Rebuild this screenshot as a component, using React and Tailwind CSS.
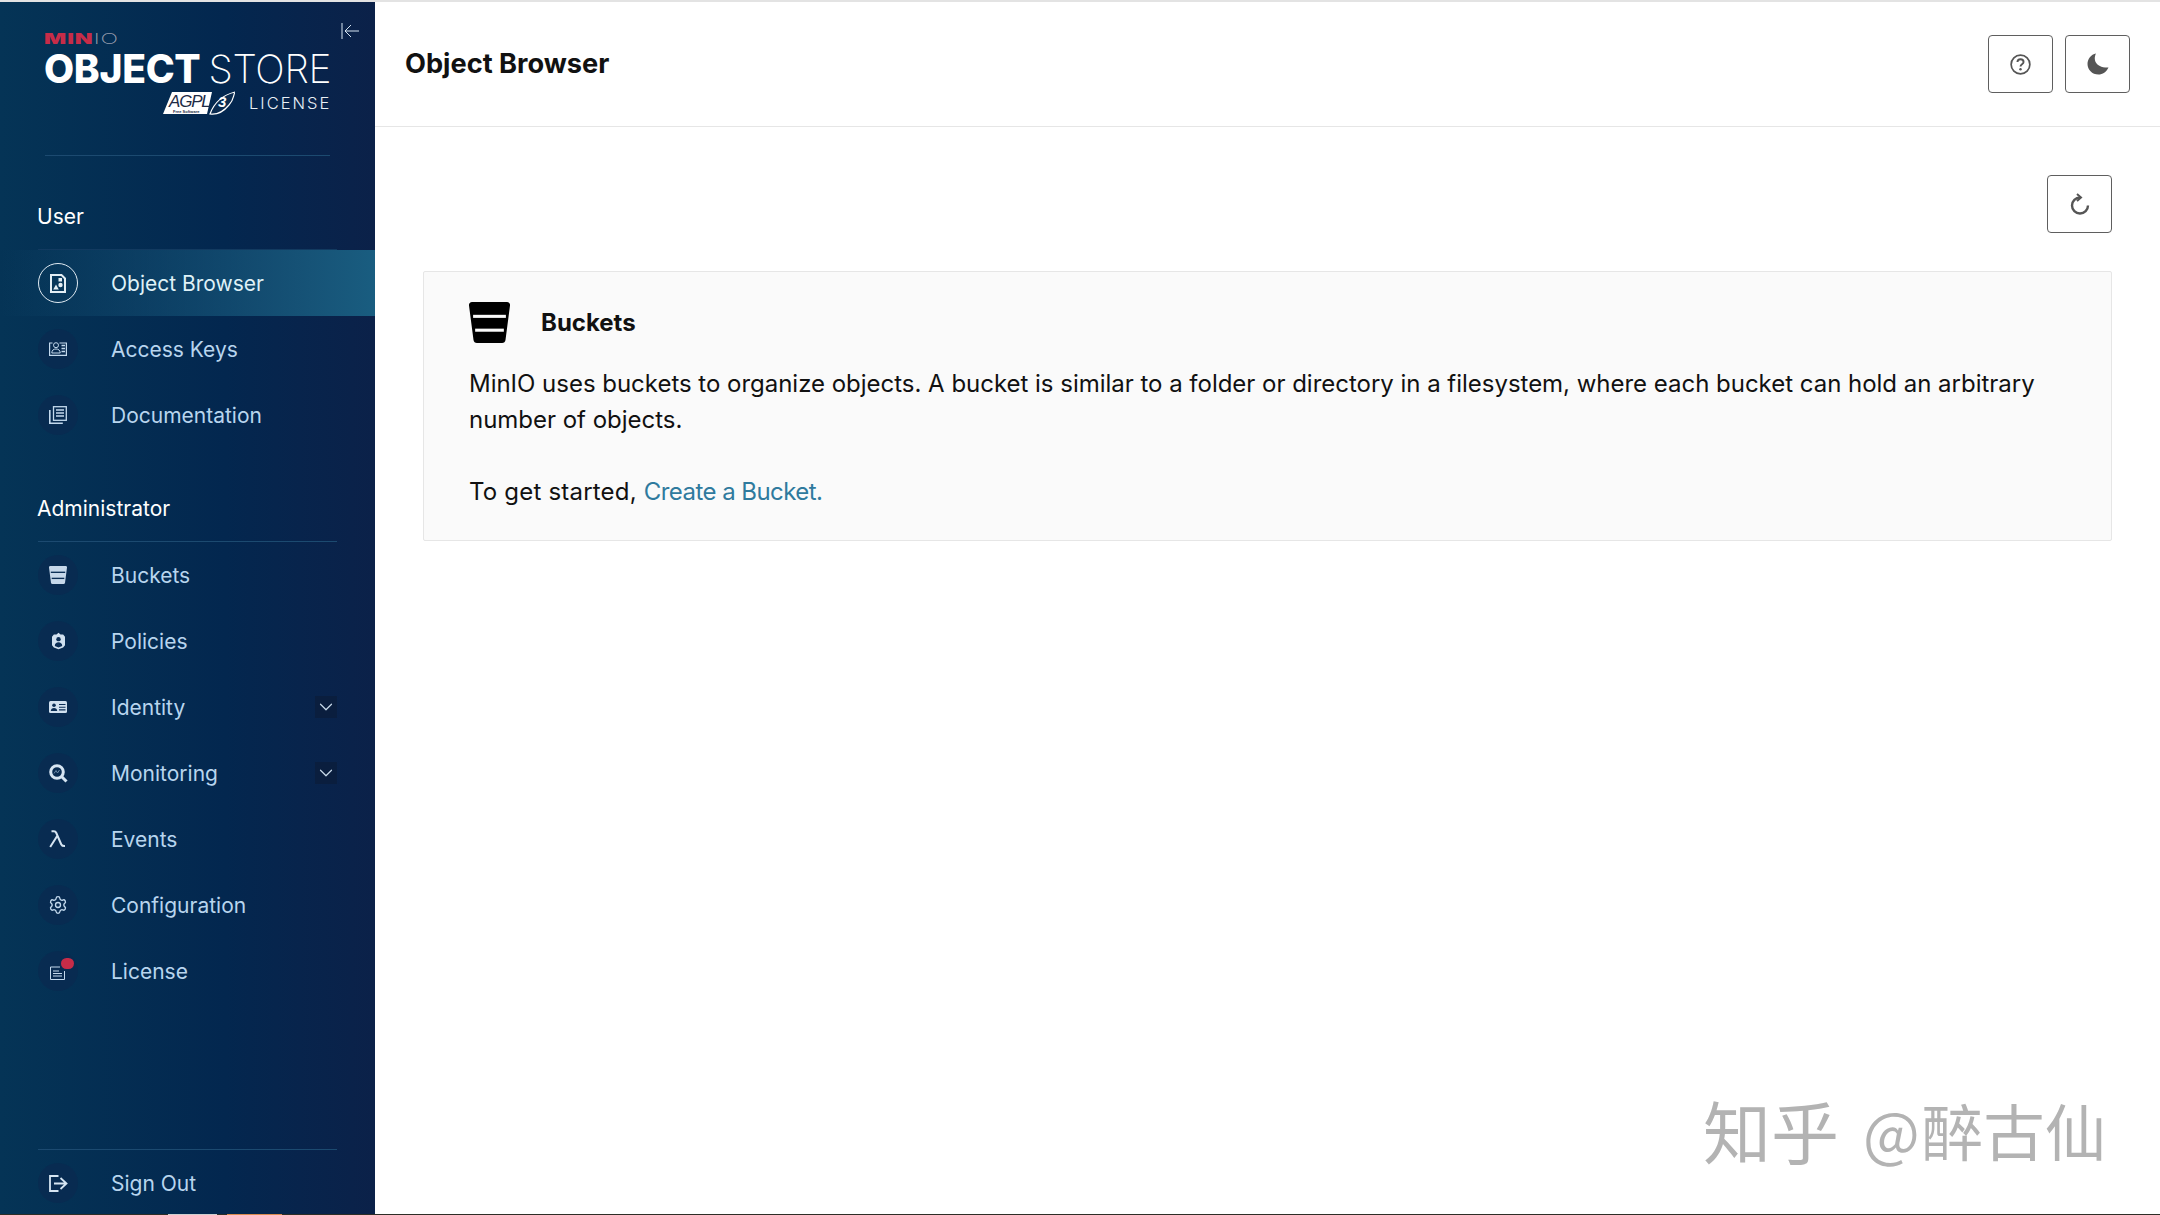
import React from "react";
import { ChevronDown, Settings } from "lucide-react";

function ObjectBrowserIcon() {
  return (
    <svg viewBox="0 0 16 19" className="w-[16px] h-[19px]" fill="none">
      <path d="M1 1h10.500L15 4.500V18H1z" stroke="#e3eef5" strokeWidth="2" />
      <rect x="8.500" y="4" width="3.500" height="3.500" fill="#e3eef5" />
      <circle cx="10.500" cy="11" r="2.200" fill="#e3eef5" />
      <path d="M6 10.500l2.800 5H3.200z" fill="#e3eef5" />
    </svg>
  );
}

function AccessKeysIcon() {
  return (
    <svg viewBox="0 0 18 14" className="w-[18px] h-[14px]" fill="none" stroke="#c3d9ed" strokeWidth="1">
      <path d="M3.500 1H.6v12.400h16.800V1H10.500" strokeWidth="1.200" />
      <circle cx="7" cy="3.200" r="2.500" />
      <path d="M2.800 11c0-2.800 1.800-4 4.200-4s4.200 1.200 4.200 4z" />
      <path d="M12.500 3.500h3.500M12.500 6.500h3.500M12.500 9.500h3.500" strokeWidth="1.500" />
    </svg>
  );
}

function DocumentationIcon() {
  return (
    <svg viewBox="0 0 18 18" className="w-[18px] h-[18px]" fill="none" stroke="#c3d9ed">
      <rect x="4.500" y="0.700" width="12.800" height="13.600" strokeWidth="1.300" />
      <path d="M7 4h8M7 7h8M7 10h8" strokeWidth="1.400" />
      <path d="M0.800 4v13.200h13" strokeWidth="1.600" />
    </svg>
  );
}

function BucketIcon({ size = "w-[18px] h-[18px]", fill = "#c6d8ea", line = "#0a2d55" }) {
  return (
    <svg viewBox="0 0 40 40" className={size}>
      <path d="M3 0h34a3 3 0 0 1 3 3.400L35.600 37a3.500 3.500 0 0 1-3.400 3H7.800a3.500 3.500 0 0 1-3.400-3L0 3.400A3 3 0 0 1 3 0z" fill={fill} />
      <rect x="4" y="12.500" width="32" height="3" fill={line} />
      <rect x="6" y="26" width="28" height="3" fill={line} />
    </svg>
  );
}

function PoliciesIcon() {
  return (
    <svg viewBox="0 0 14 18" className="w-[13px] h-[18px]">
      <path d="M7 0l2.200 2H12l2 2.500v9L12 16l-5 2-5-2-2-2.500v-9L2 2h2.800z" fill="#d0e0ef" />
      <circle cx="7" cy="7" r="2.400" fill="#0a2d55" />
      <path d="M3 14.500c0-3 1.800-4.200 4-4.200s4 1.200 4 4.200l-4 1.500z" fill="#0a2d55" />
    </svg>
  );
}

function IdentityIcon() {
  return (
    <svg viewBox="0 0 18 12" className="w-[18px] h-[12px]">
      <rect width="18" height="12" rx="1.500" fill="#d0e0ef" />
      <circle cx="5" cy="4.300" r="1.800" fill="#0a2d55" />
      <path d="M1.800 10c0-2 1.400-3 3.200-3s3.200 1 3.200 3z" fill="#0a2d55" />
      <path d="M10 3.500h6.500M10 6.200h6.500M10 8.900h6.500" stroke="#0a2d55" strokeWidth="1.100" />
    </svg>
  );
}

function MonitoringIcon() {
  return (
    <svg viewBox="0 0 19 19" className="w-[19px] h-[19px]" fill="none">
      <circle cx="8" cy="8" r="6.300" stroke="#d6e5f2" strokeWidth="3" />
      <path d="M12.500 12.500l5 5" stroke="#d6e5f2" strokeWidth="3" />
      <path d="M5 9.500l2-3 1.500 2.500 2-3" stroke="#6b8aa8" strokeWidth="1" />
    </svg>
  );
}

function LambdaIcon() {
  return (
    <svg viewBox="0 0 18 18" className="w-[18px] h-[18px]" fill="none" stroke="#d6e5f2" strokeWidth="2">
      <path d="M2.500 1.200h2.300c1.300 0 2 .6 2.500 1.800l5 11.500c.5 1.100 1.200 1.700 3.700 1.600M8 6.300L1.200 17" />
    </svg>
  );
}

function LicenseIcon() {
  return (
    <span className="relative flex">
      <svg viewBox="0 0 15 14" className="w-[15px] h-[14px] mt-[4px] -ml-[1px]" fill="none" stroke="#c3d9ed" strokeWidth="1">
        <path d="M10 1H.5v12.500h14V5" />
        <path d="M3 5h6M3 7.500h9M3 10h9" strokeWidth="1.100" />
      </svg>
      <span className="absolute -top-[4px] left-[10px] w-[13px] h-[11px] rounded-full bg-[#c72c48]" />
    </span>
  );
}

function SignOutIcon() {
  return (
    <svg viewBox="0 0 19 17" className="w-[19px] h-[17px]" fill="none" stroke="#d6e5f2" strokeWidth="1.800">
      <path d="M9.500 1H1v15h8.500" />
      <path d="M5 8.500h12.500M11.500 3l6 5.500-6 5.500" />
    </svg>
  );
}

function NavRow({ label, icon, active, expand }) {
  return (
    <div className={`flex items-center h-[66px] shrink-0 pl-[38px] pr-[38px] ${active ? "bg-linear-to-r from-transparent to-[#195d80]" : ""}`}>
      <span className={`flex items-center justify-center w-[40px] h-[40px] rounded-full shrink-0 ${active ? "border border-[#dfeaf2]" : "bg-[#0a2a50]/70"}`}>
        {icon}
      </span>
      <span className={`ml-[33px] text-[21px] leading-none ${active ? "text-[#dff1f7]" : "text-[#b8d5ee]"}`}>{label}</span>
      {expand && (
        <span className="ml-auto flex items-center justify-center w-[22px] h-[22px] bg-[#0a1e3e]">
          <ChevronDown size={22} color="#c9dbea" strokeWidth={1.300} />
        </span>
      )}
    </div>
  );
}

function AgplLogo() {
  return (
    <svg viewBox="0 0 72 24" className="w-[72px] h-[24px] ml-[119px] shrink-0">
      <path d="M0 23L9 1H49L44 23z" fill="#fff" />
      <text x="6" y="16" fontFamily="Liberation Sans" fontStyle="italic" fontSize="17" fill="#1d2b45" letterSpacing="-1.200">AGPL</text>
      <text x="10" y="21.500" fontFamily="Liberation Sans" fontWeight="700" fontSize="4" fill="#1d2b45">Free Software</text>
      <path d="M47 23C51 12 60 4 72 1 70 5 71 9 66 14 61 20 54 24 47 23z" fill="#0a2b50" stroke="#fff" strokeWidth="1.200" />
      <text x="55" y="16" fontFamily="Liberation Sans" fontStyle="italic" fontWeight="700" fontSize="15" fill="#fff">3</text>
    </svg>
  );
}

function Logo() {
  return (
    <div className="relative h-[153px] shrink-0 pl-[44px]">
      <div className="pt-[29px] leading-none text-[15px] tracking-[0.6px] text-[#c72c48] h-[48px] w-fit origin-left scale-x-[1.55]">
        <span className="font-black">MIN</span>
        <span className="font-extralight text-[#d8d0d8]/70">IO</span>
      </div>
      <div className="text-[39px] leading-[38px] text-white tracking-[-0.300px] whitespace-nowrap">
        <span className="font-extrabold">OBJECT</span>
        <span className="font-extralight ml-[8px]">STORE</span>
      </div>
      <div className="flex items-center mt-[2px] h-[26px]">
        <AgplLogo />
        <span className="ml-[14px] text-[16.500px] font-light tracking-[2px] text-[#e8f0f6] leading-none">LICENSE</span>
      </div>
      {/* collapse button */}
      <svg viewBox="0 0 18 16" className="absolute left-[341px] top-[21px] w-[18px] h-[16px]" fill="none" stroke="#d6e5f2" strokeWidth="1">
        <path d="M1 0v16M18 8H4M10 2L4 8l6 6" />
      </svg>
    </div>
  );
}

function Sidebar() {
  return (
    <aside className="flex flex-col w-[375px] shrink-0 overflow-hidden bg-linear-to-r from-[#053456] from-0% via-[#03274f] via-60% to-[#0b2149] to-100%">
      <Logo />
      <div className="mx-[45px] w-[285px] border-t border-[#1c4a70] shrink-0" />
      <div className="mt-[47px] mb-[18px] mx-[37px] h-[28px] flex items-center text-[21px] text-white shrink-0">User</div>
      <div className="mx-[38px] border-t border-[#123a60] shrink-0" />
      <NavRow label="Object Browser" icon={<ObjectBrowserIcon />} active />
      <NavRow label="Access Keys" icon={<AccessKeysIcon />} />
      <NavRow label="Documentation" icon={<DocumentationIcon />} />
      <div className="mt-[47px] mb-[18px] mx-[37px] h-[28px] flex items-center text-[21px] text-white shrink-0">Administrator</div>
      <div className="mx-[38px] border-t border-[#1c4a70] shrink-0" />
      <NavRow label="Buckets" icon={<BucketIcon />} />
      <NavRow label="Policies" icon={<PoliciesIcon />} />
      <NavRow label="Identity" icon={<IdentityIcon />} expand />
      <NavRow label="Monitoring" icon={<MonitoringIcon />} expand />
      <NavRow label="Events" icon={<LambdaIcon />} />
      <NavRow label="Configuration" icon={<Settings size={20} color="#c3d9ed" strokeWidth={1.600} />} />
      <NavRow label="License" icon={<LicenseIcon />} />
      <div className="mt-auto mx-[38px] border-t border-[#1c4a70] shrink-0" />
      <div className="-mb-[2px]">
        <NavRow label="Sign Out" icon={<SignOutIcon />} />
      </div>
    </aside>
  );
}

function IconButton({ children }) {
  return (
    <button className="flex items-center justify-center w-[65px] h-[58px] rounded-[4px] border-[1.500px] border-[#5f5f5f] bg-white text-[#555]">
      {children}
    </button>
  );
}

export default function App() {
  return (
    <div className="relative flex flex-col w-[2160px] h-[1215px] overflow-hidden bg-white font-[Inter,sans-serif]">
      <div className="h-[2px] bg-[#e3e3e3] shrink-0" />
      <div className="flex flex-1 min-h-0">
        <Sidebar />
        <main className="flex-1 min-w-0">
          <header className="flex items-center justify-between h-[125px] pl-[30px] pr-[30px] border-b border-[#e6e6e6]">
            <h1 className="text-[27.200px] font-bold text-[#111]">Object Browser</h1>
            <div className="flex gap-[12px]">
              <IconButton>
                <svg viewBox="0 0 22 22" className="w-[21px] h-[21px]" fill="none" stroke="#555" strokeWidth="1.800">
                  <circle cx="11" cy="11" r="9.800" />
                  <path d="M7.800 8.500c0-2 1.400-3 3.200-3s3.200 1.100 3.200 2.800c0 2.400-3.200 2.300-3.200 4.700" strokeWidth="2" />
                  <circle cx="11" cy="16" r="1.300" fill="#555" stroke="none" />
                </svg>
              </IconButton>
              <IconButton>
                <svg viewBox="0 0 22 22" className="w-[22px] h-[22px]">
                  <path d="M9 .500C6 6 8 15 21.500 14.500 19.500 19 15.500 21.500 11.500 21.500 5 21.500.500 16.500.500 11 .500 6 4 1.500 9 .500z" fill="#555" />
                </svg>
              </IconButton>
            </div>
          </header>
          <div className="pl-[48px] pr-[48px]">
            <div className="flex justify-end pt-[48px]">
              <IconButton>
                <svg viewBox="0 0 20 23" className="w-[20px] h-[23px]" fill="none" stroke="#555" strokeWidth="2.400">
                  <path d="M10 4.500a8 8 0 1 0 8 8" />
                  <path d="M7 1l4 3.500L7 8" strokeWidth="2" />
                </svg>
              </IconButton>
            </div>
            <section className="mt-[38px] h-[270px] rounded-[2px] border border-[#e6e6e6] bg-[#fafafa] pt-[30px] pl-[45px] pr-[45px]">
              <div className="flex items-center gap-[31px]">
                <BucketIcon size="w-[41px] h-[41px]" fill="#000" line="#fafafa" />
                <h2 className="text-[24px] font-bold text-[#111]">Buckets</h2>
              </div>
              <p className="mt-[23px] text-[24px] leading-[36px] tracking-[-0.020px] text-[#111]">
                MinIO uses buckets to organize objects. A bucket is similar to a folder or directory in a filesystem, where each bucket can hold an arbitrary number of objects.
              </p>
              <p className="mt-[36px] text-[24px] leading-[36px] text-[#111]">
                <span className="tracking-[0.200px]">To get started, </span>
                <a className="text-[#2f7a9e] tracking-[-0.550px]">Create a Bucket.</a>
              </p>
            </section>
          </div>
        </main>
      </div>
      <div className="flex h-px bg-[#2e2e26] shrink-0 pl-[168px]">
        <span className="w-[49px] bg-[#cfcfcf]" />
        <span className="ml-[10px] w-[55px] bg-[#d98a4e]" />
      </div>
      {/* watermark */}
      <div className="absolute left-[1703px] top-[1090px] flex items-center h-[80px] text-[#b3b3b3] whitespace-nowrap font-['Noto_Sans_CJK_SC',sans-serif]">
        <span className="text-[68px] leading-none">知乎</span>
        <span className="ml-[24px] text-[60px] leading-none">@</span>
        <span className="ml-[2px] text-[61.500px] leading-none">醉古仙</span>
      </div>
    </div>
  );
}
